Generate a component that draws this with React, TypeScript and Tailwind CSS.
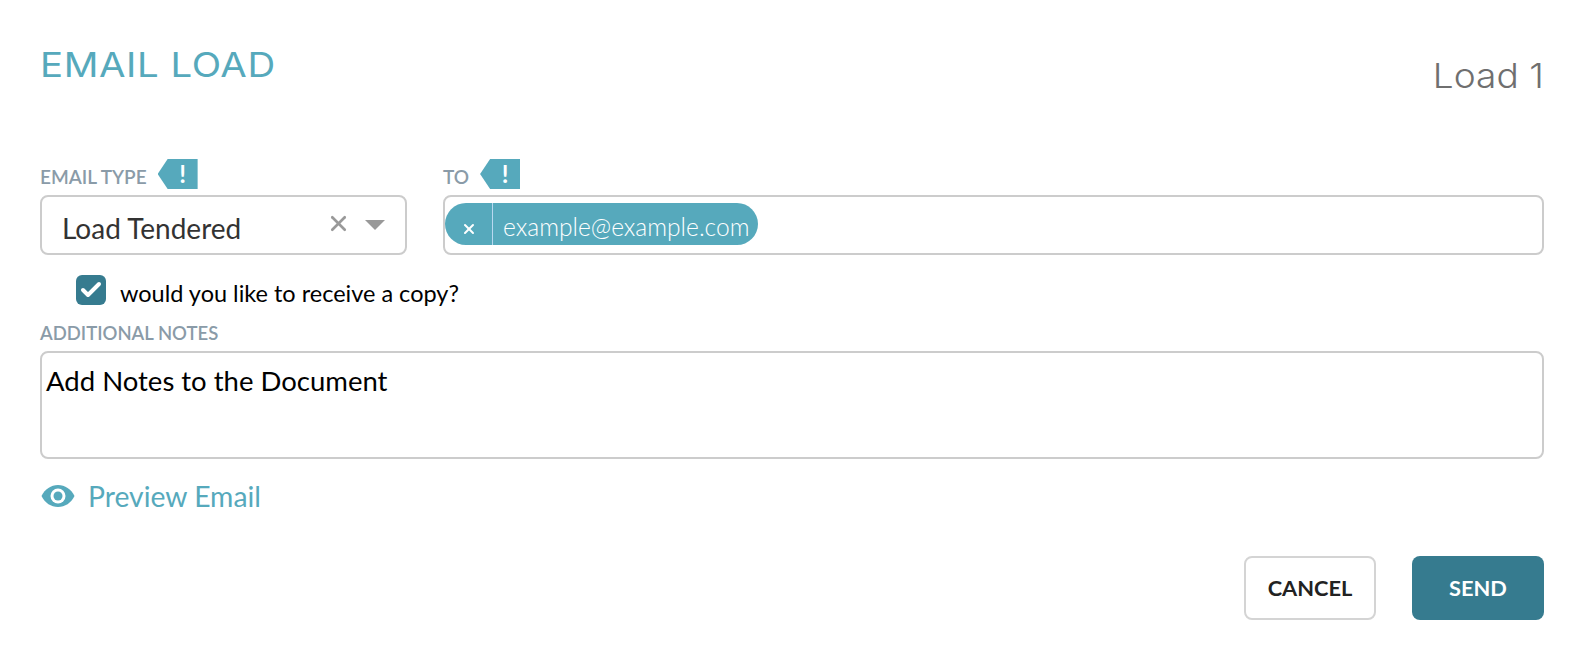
import { Check, X } from "lucide-react";

function Badge() {
  return (
    <div className="flex h-[30px] w-10 items-center justify-center bg-[#56a9bc] pl-[10px] text-[24px] font-bold text-white [clip-path:polygon(10px_0,100%_0,100%_100%,10px_100%,0_50%)]">
      !
    </div>
  );
}

function FieldLabel({ text }: { text: string }) {
  return (
    <div className="flex h-[30px] items-center gap-[11px]">
      <span className="pt-[7px] text-[19px] font-semibold text-[#8a9ba8]">{text}</span>
      <Badge />
    </div>
  );
}

export default function App() {
  return (
    <div className="h-[666px] w-[1586px] bg-white pl-10 pr-[42px] font-['Lato',sans-serif]">
      <div className="flex h-[159px] items-start justify-between">
        <h2 className="mt-[42px] origin-left scale-x-[1.13] font-['Inter',sans-serif] text-[34px] leading-[46px] font-normal tracking-[0.5px] text-[#56a9bc]">
          EMAIL LOAD
        </h2>
        <span className="mt-[53px] origin-right scale-x-[1.09] font-['Inter',sans-serif] text-[34px] leading-[46px] font-light text-[#6f6f6f]">
          Load 1
        </span>
      </div>

      <div className="flex gap-9">
        <div className="w-[367px]">
          <div className="mb-[6px]">
            <FieldLabel text="EMAIL TYPE" />
          </div>
          <div className="flex h-[60px] items-center rounded-lg border-2 border-[#cccccc] pl-[20px] pr-[20px]">
            <span className="flex-1 pt-[5px] text-[28px] text-[#333333]">Load Tendered</span>
            <X size={25} strokeWidth={2.5} className="mr-[14px] -mt-1 text-[#999999]" />
            <div className="h-0 w-0 border-x-[10px] border-t-[10px] border-x-transparent border-t-[#999999]" />
          </div>
        </div>
        <div className="flex-1">
          <div className="mb-[6px]">
            <FieldLabel text="TO" />
          </div>
          <div className="flex h-[60px] items-center rounded-lg border-2 border-[#cccccc]">
            <div className="-mt-[2px] flex h-[42px] items-center rounded-[21px] bg-[#56a9bc] pr-2 text-white">
              <div className="flex h-full w-[48px] items-center justify-center border-r border-[#b8d8f0]">
                <X size={16} strokeWidth={3} className="mt-[10px]" />
              </div>
              <span className="pl-[10px] pt-[7px] text-[24.6px] font-light">example@example.com</span>
            </div>
          </div>
        </div>
      </div>

      <div className="mt-5 flex h-[30px] items-center pl-9">
        <div className="flex h-[30px] w-[30px] items-center justify-center rounded-md bg-[#367b8f]">
          <Check size={24} strokeWidth={4} className="text-white" />
        </div>
        <span className="ml-[14px] pt-[7px] text-[23.5px] text-black">would you like to receive a copy?</span>
      </div>

      <div className="mt-4 text-[18.5px] leading-6 font-semibold text-[#8a9ba8]">ADDITIONAL NOTES</div>
      <div className="mt-[6px] h-[108px] rounded-lg border-2 border-[#cccccc] pl-[4px] pt-[10px] text-[27.5px] leading-9 text-black">
        Add Notes to the Document
      </div>

      <div className="mt-[19px] flex h-9 items-center gap-[13px] pl-[1px] text-[#56a9bc]">
        <svg width="34" height="24" viewBox="0 0 34 24" fill="none">
          <path
            d="M0.5 12C4 5 10 1 17 1s13 4 16.5 11C30 19 24 23 17 23S4 19 .5 12Z"
            fill="#56a9bc"
          />
          <circle cx="17" cy="12" r="7.5" fill="white" />
          <circle cx="17" cy="12" r="4.5" fill="#56a9bc" />
        </svg>
        <span className="text-[28.3px]">Preview Email</span>
      </div>

      <div className="mt-[42px] flex justify-end gap-9">
        <button className="h-16 w-[132px] rounded-lg border-2 border-[#d4d4d4] bg-white text-[21.8px] font-bold text-[#222222]">
          CANCEL
        </button>
        <button className="h-16 w-[132px] rounded-lg bg-[#367b8f] text-[21.8px] font-bold text-white">
          SEND
        </button>
      </div>
    </div>
  );
}
